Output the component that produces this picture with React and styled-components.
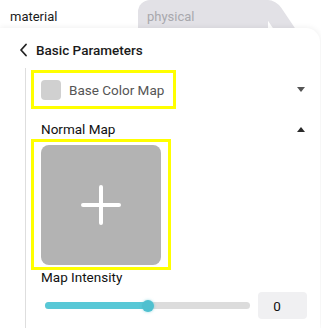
import React from 'react';
import styled, { createGlobalStyle } from 'styled-components';

const Global = createGlobalStyle`
  html, body {
    margin: 0;
    padding: 0;
    background: #fff;
  }
  body {
    width: 321px;
    height: 328px;
    overflow: hidden;
    font-family: Roboto, "Noto Sans", "Liberation Sans", sans-serif;
    color: #1a1a1a;
  }
`;

const Tabs = styled.div`
  display: flex;
  align-items: stretch;
  height: 28px;
`;

const Tab = styled.div`
  position: relative;
  display: flex;
  align-items: center;
  font-size: 13px;
  box-sizing: border-box;
  width: ${props => props.width}px;
  padding-left: ${props => props.pad}px;
  padding-top: 4px;
  color: ${props => (props.active ? '#1a1a1a' : '#a8a8ad')};
  background: ${props => (props.active ? 'transparent' : '#e2e1e6')};
  border-top-left-radius: ${props => (props.active ? 0 : 12)}px;

  &::after {
    content: '';
    display: ${props => (props.active ? 'none' : 'block')};
    position: absolute;
    top: 0;
    right: -8px;
    width: 22px;
    height: 100%;
    background: #e2e1e6;
    transform: skewX(34deg);
    transform-origin: top left;
    border-top-right-radius: 8px;
  }
`;

const Panel = styled.div`
  position: relative;
  width: 320px;
  height: 300px;
  background: #fff;
  border-top-right-radius: 14px;
  box-shadow: 0 0 6px rgba(0, 0, 0, 0.08);
`;

const Header = styled.div`
  box-sizing: border-box;
  display: flex;
  align-items: center;
  gap: 8px;
  height: 40px;
  padding-top: 4px;
  padding-left: 19px;
  font-size: 13.5px;
  font-weight: 500;
  color: #1a1a1a;
`;

const Body = styled.div`
  margin-left: 25px;
  margin-right: 13px;
  border-left: 1px solid #dedede;
  padding-left: 5px;
  padding-top: 2px;
  height: 262px;
  display: flex;
  flex-direction: column;
`;

const Row = styled.div`
  display: flex;
  align-items: center;
  justify-content: space-between;
  padding-right: 2px;
`;

const Highlight = styled.div`
  box-sizing: border-box;
  border: 3px solid #ffff00;
  width: ${props => props.width}px;
  height: ${props => props.height}px;
  display: flex;
  align-items: ${props => (props.top ? 'flex-start' : 'center')};
  gap: 8px;
  padding: ${props => (props.top ? '3px 7px' : '0 7px')};
  white-space: nowrap;
`;

const Swatch = styled.div`
  width: 20px;
  height: 20px;
  border-radius: 4px;
  background: #d0d0d0;
`;

const SelectText = styled.span`
  font-size: 13.5px;
  color: #555;
`;

const Caret = styled.div`
  width: 0;
  height: 0;
  border-left: 4px solid transparent;
  border-right: 4px solid transparent;
  ${props =>
    props.up
      ? 'border-bottom: 5px solid #2a2a2a;'
      : 'border-top: 5px solid #555;'}
`;

const Label = styled.div`
  font-size: 13.5px;
  color: #111;
  padding-left: 10px;
`;

const Upload = styled.div`
  width: 120px;
  height: 120px;
  border-radius: 8px;
  background: #b3b3b3;
  display: flex;
  align-items: center;
  justify-content: center;
`;

const SliderRow = styled.div`
  display: flex;
  align-items: center;
  gap: 8px;
  padding-left: 14px;
  margin-top: 7px;
`;

const Track = styled.div`
  position: relative;
  width: 206px;
  height: 7px;
  border-radius: 4px;
  background: #dcdcdc;
`;

const Fill = styled.div`
  height: 100%;
  border-radius: 4px;
  background: #58c8d6;
`;

const Thumb = styled.div`
  position: absolute;
  top: 50%;
  width: 12px;
  height: 12px;
  border-radius: 50%;
  background: #4fc0cf;
  transform: translate(-50%, -50%);
  box-shadow: 0 0 3px rgba(79, 192, 207, 0.6);
`;

const NumberBox = styled.div`
  box-sizing: border-box;
  width: 49px;
  height: 27px;
  border-radius: 4px;
  background: #f0f0f2;
  font-size: 13.5px;
  display: flex;
  align-items: center;
  padding-left: 15px;
  color: #111;
`;

export default function App() {
  const value = 50;
  return (
    <>
      <Global />
      <Tabs>
        <Tab active width={138} pad={10}>material</Tab>
        <Tab width={130} pad={9}>physical</Tab>
      </Tabs>
      <Panel>
        <Header>
          <svg width="9" height="14" viewBox="0 0 9 14">
            <path d="M7 1.5 L2 7 L7 12.5" fill="none" stroke="#222" strokeWidth="1.8" strokeLinecap="round" strokeLinejoin="round" />
          </svg>
          Basic Parameters
        </Header>
        <Body>
          <Row>
            <Highlight width={145} height={39}>
              <Swatch />
              <SelectText>Base Color Map</SelectText>
            </Highlight>
            <Caret />
          </Row>
          <Row style={{ marginTop: 10, height: 20 }}>
            <Label>Normal Map</Label>
            <Caret up />
          </Row>
          <Highlight width={140} height={131} top>
            <Upload>
              <svg width="42" height="42" viewBox="0 0 42 42">
                <path d="M21 3 V39 M3 21 H39" stroke="#fff" strokeWidth="4" strokeLinecap="round" />
              </svg>
            </Upload>
          </Highlight>
          <Label style={{ marginTop: -1 }}>Map Intensity</Label>
          <SliderRow>
            <Track>
              <Fill style={{ width: `${value}%` }} />
              <Thumb style={{ left: `${value}%` }} />
            </Track>
            <NumberBox>0</NumberBox>
          </SliderRow>
        </Body>
      </Panel>
    </>
  );
}
